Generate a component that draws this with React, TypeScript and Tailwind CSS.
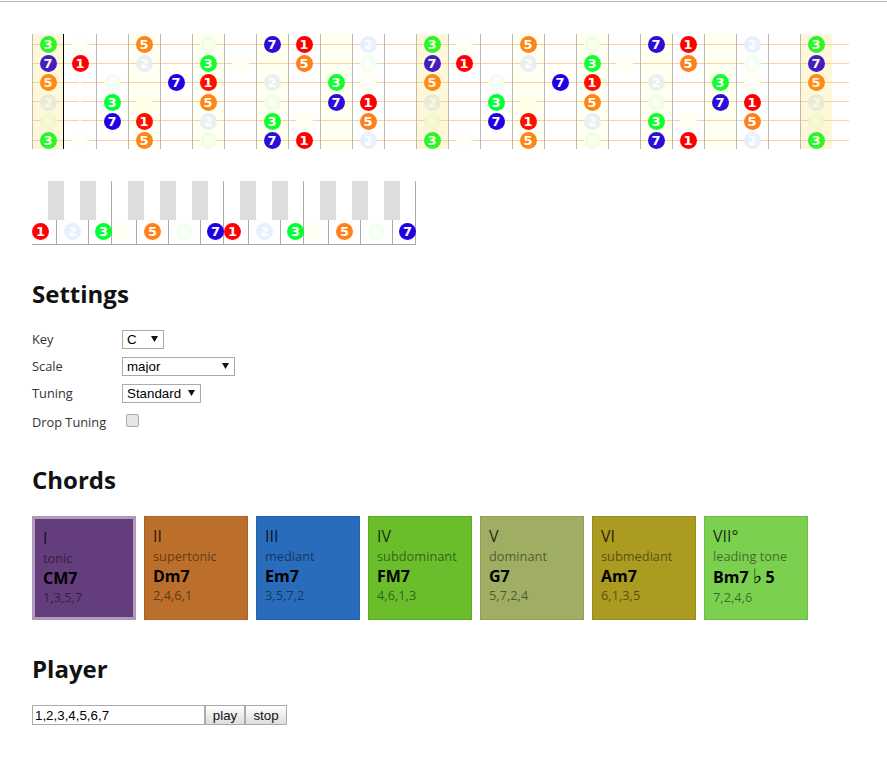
const DEGREES: Record<number, number> = { 0: 1, 2: 2, 4: 3, 5: 4, 7: 5, 9: 6, 11: 7 };
const OPEN_STRINGS = [4, 11, 7, 2, 9, 4];
const FRETS = Array.from({ length: 25 }, (_, i) => i);

const NOTE_STYLES: Record<number, string> = {
  1: "bg-[#ff0000]",
  2: "bg-[#e6f0ff]",
  3: "bg-[#00ff33]",
  4: "bg-[#fffff0]",
  5: "bg-[#ff7f1a]",
  6: "bg-[#f0fff0]",
  7: "bg-[#2200e6]",
};

const STRONG_FRETS = [0, 12, 24];
const LIGHT_FRETS = [3, 5, 7, 9, 15, 17, 19, 21];

function Note({ degree, className = "" }: { degree: number; className?: string }) {
  return (
    <span
      className={`flex h-[17px] w-[17px] flex-none items-center justify-center rounded-full font-['DejaVu_Sans',sans-serif] text-[13px] font-bold leading-none text-white ${NOTE_STYLES[degree]} ${className}`}
    >
      {degree}
    </span>
  );
}

function Fretboard() {
  return (
    <div className="relative h-[115px] w-[817px] overflow-hidden">
      {OPEN_STRINGS.map((open, row) => (
        <div key={row} className={`relative flex ${row === 4 ? "h-[20px]" : "h-[19px]"}`}>
          <span className="absolute left-0 right-0 top-[10px] h-px bg-[#fdd3a4]" />
          {FRETS.map((fret) => {
            const degree = DEGREES[(open + fret) % 12];
            return (
              <div
                key={fret}
                className={`relative flex w-8 flex-none justify-center ${row === 3 || row === 4 ? "pt-[3px]" : "pt-[2px]"}`}
              >
                {degree ? <Note degree={degree} /> : null}
                {fret === 1 && row >= 2 && row <= 4 ? (
                  <span className="absolute left-[15px] top-[10px] h-px w-[2px] bg-white" />
                ) : null}
              </div>
            );
          })}
        </div>
      ))}
      <div className="absolute inset-y-0 left-0 flex">
        {FRETS.map((fret) => (
          <div
            key={fret}
            className={`w-8 flex-none ${fret === 1 ? "" : "border-l border-[#bdbab4]"} ${fret === 0 ? "border-r border-r-black" : ""} ${STRONG_FRETS.includes(fret) ? "bg-[#ffc800]/15" : ""} ${LIGHT_FRETS.includes(fret) ? "bg-[#ffff00]/5" : ""}`}
          />
        ))}
      </div>
    </div>
  );
}

const OCTAVE = [
  { degree: 1, width: "w-6", lines: "", align: "justify-start", note: "", black: "left-4" },
  { degree: 2, width: "w-8", lines: "border-l", align: "justify-center", note: "", black: "left-[23px]" },
  { degree: 3, width: "w-6", lines: "border-l border-r", align: "justify-end", note: "-mr-px", black: "" },
  { degree: 4, width: "w-6", lines: "", align: "justify-start", note: "", black: "left-4" },
  { degree: 5, width: "w-8", lines: "border-l", align: "justify-center", note: "", black: "left-[23px]" },
  { degree: 6, width: "w-8", lines: "border-l", align: "justify-center", note: "", black: "left-[23px]" },
  { degree: 7, width: "w-6", lines: "border-l border-r", align: "justify-end", note: "-mr-px", black: "" },
];

function Piano() {
  return (
    <div className="mt-8 flex h-[64px] w-[384px] border-b border-[#aaaaaa]">
      {[0, 1].map((octave) =>
        OCTAVE.map((key) => (
          <div
            key={`${octave}-${key.degree}`}
            className={`relative flex flex-none items-end border-[#aaaaaa] pb-[4px] ${key.width} ${key.lines} ${key.align}`}
          >
            <Note degree={key.degree} className={key.note} />
            {key.black ? <span className={`absolute top-0 z-10 h-[39px] w-4 bg-[#dddddd] ${key.black}`} /> : null}
          </div>
        )),
      )}
    </div>
  );
}

function Heading({ children, className }: { children: string; className: string }) {
  return <h2 className={`text-[24px] font-bold leading-[32px] text-[#111] ${className}`}>{children}</h2>;
}

function Select({ value, options, width }: { value: string; options: string[]; width: string }) {
  return (
    <div className={`relative h-[19px] ${width}`}>
      <select
        defaultValue={value}
        className="block h-full w-full appearance-none border border-[#aaaaaa] bg-white pl-1 font-['Liberation_Sans',sans-serif] text-[13.33px] leading-none text-black"
      >
        {options.map((option) => (
          <option key={option}>{option}</option>
        ))}
      </select>
      <svg className="absolute right-[6px] top-[6px]" width="7" height="6" viewBox="0 0 7 6">
        <path d="M0 0h7L3.5 6z" fill="#111" />
      </svg>
    </div>
  );
}

function Row({ label, children, className }: { label: string; children: React.ReactNode; className: string }) {
  return (
    <div className={`flex items-center text-[12.8px] text-[#333] ${className}`}>
      <span className="w-[90px] flex-none">{label}</span>
      {children}
    </div>
  );
}

const CHORDS = [
  { numeral: "I", role: "tonic", name: "CM7", notes: "1,3,5,7", color: "bg-[#643d7c]", border: "border-[3px] border-[#ae9abc]" },
  { numeral: "II", role: "supertonic", name: "Dm7", notes: "2,4,6,1", color: "bg-[#bb6f2b]", border: "border border-[#a96426]" },
  { numeral: "III", role: "mediant", name: "Em7", notes: "3,5,7,2", color: "bg-[#296cbb]", border: "border border-[#2561a8]" },
  { numeral: "IV", role: "subdominant", name: "FM7", notes: "4,6,1,3", color: "bg-[#6abe2b]", border: "border border-[#5fab27]" },
  { numeral: "V", role: "dominant", name: "G7", notes: "5,7,2,4", color: "bg-[#9fae63]", border: "border border-[#8f9d59]" },
  { numeral: "VI", role: "submediant", name: "Am7", notes: "6,1,3,5", color: "bg-[#ab9b21]", border: "border border-[#9a8c1e]" },
  { numeral: "VII°", role: "leading tone", name: "Bm7", flat: "5", notes: "7,2,4,6", color: "bg-[#7bd04f]", border: "border border-[#6fbb47]" },
];

function ChordCard({ chord }: { chord: (typeof CHORDS)[number] }) {
  return (
    <div className={`h-[104px] w-[104px] px-2 pt-2 ${chord.color} ${chord.border}`}>
      <div className="text-[16px] leading-[22px] text-black/80">{chord.numeral}</div>
      <div className="text-[12.8px] leading-[19px] text-black/50">{chord.role}</div>
      <div className={`h-[21px] text-[16px] font-bold leading-[21px] text-black ${chord.flat ? "mb-[2px]" : ""}`}>
        {chord.name}
        {chord.flat ? (
          <>
            <span className="inline-block h-[21px] w-[17px] text-center font-['DejaVu_Sans',sans-serif] text-[20px] font-normal leading-[21px]">
              ♭
            </span>
            {chord.flat}
          </>
        ) : null}
      </div>
      <div className="text-[12.8px] leading-[17px] text-black/50">{chord.notes}</div>
    </div>
  );
}

export default function App() {
  return (
    <div className="min-h-[759px] bg-white pt-px font-['Open_Sans','DejaVu_Sans',sans-serif]">
      <div className="border-t border-[#bbbbbb] px-8 pt-[32px]">
        <Fretboard />
        <Piano />

        <Heading className="mt-[33px]">Settings</Heading>
        <div className="mt-[20px]">
          <Row label="Key" className="h-[19px]">
            <Select value="C" options={["C", "D", "E", "F", "G", "A", "B"]} width="w-[42px]" />
          </Row>
          <Row label="Scale" className="mt-[8px] h-[19px]">
            <Select value="major" options={["major", "minor"]} width="w-[113px]" />
          </Row>
          <Row label="Tuning" className="mt-[8px] h-[19px]">
            <Select value="Standard" options={["Standard", "Open G"]} width="w-[79px]" />
          </Row>
          <Row label="Drop Tuning" className="mt-[10px] h-[19px]">
            <input
              type="checkbox"
              className="-mt-1 ml-1 h-[13px] w-[13px] appearance-none rounded-[2px] border border-[#aaaaaa] bg-[#e6e6e6]"
            />
          </Row>
        </div>

        <Heading className="mt-[32px]">Chords</Heading>
        <div className="mt-[20px] flex gap-2">
          {CHORDS.map((chord) => (
            <ChordCard key={chord.numeral} chord={chord} />
          ))}
        </div>

        <Heading className="mt-[33px]">Player</Heading>
        <div className="mt-[20px] flex font-['Liberation_Sans',sans-serif] text-[13.33px]">
          <input
            defaultValue="1,2,3,4,5,6,7"
            className="h-[20px] w-[173px] border border-[#aaaaaa] bg-white px-[2px] text-black outline-none"
          />
          <button className="h-[20px] w-[40px] border border-[#aaaaaa] bg-gradient-to-b from-white to-[#dddddd] text-[#111]">
            play
          </button>
          <button className="h-[20px] w-[42px] border border-[#aaaaaa] bg-gradient-to-b from-white to-[#dddddd] text-[#111]">
            stop
          </button>
        </div>
      </div>
    </div>
  );
}
